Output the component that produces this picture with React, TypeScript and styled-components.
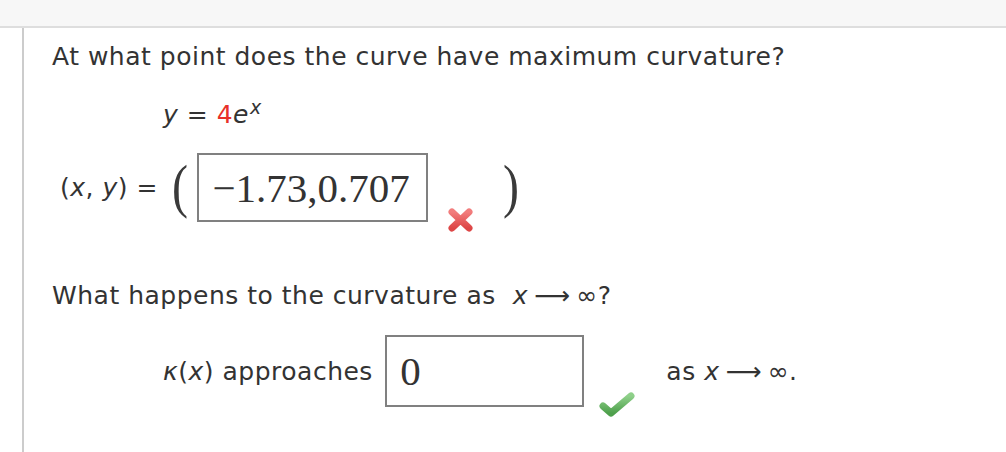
import styled, { createGlobalStyle } from "styled-components";

const GlobalStyle = createGlobalStyle`
  html, body {
    margin: 0;
    padding: 0;
    background: #ffffff;
  }
  body {
    font-family: "DejaVu Sans", Verdana, sans-serif;
    color: #333333;
  }
`;

const TopBar = styled.div`
  height: 26px;
  background-color: #f7f7f7;
  border-bottom: 2px solid #dedede;
`;

const Content = styled.div`
  margin-left: 22px;
  border-left: 2px solid #cccccc;
  height: 424px;
  box-sizing: border-box;
  padding: 14px 0 0 28px;
`;

const Text = styled.div`
  font-size: 25px;
  letter-spacing: 0.5px;
  line-height: 30px;
  margin-top: ${(p: { top?: number }) => p.top ?? 0}px;
`;

const Equation = styled(Text)`
  padding-left: 111px;
`;

const Var = styled.i`
  font-style: italic;
`;

const Red = styled.span`
  color: #e8312a;
`;

const Sup = styled.sup`
  font-size: 19px;
  line-height: 0;
  vertical-align: 9px;
  margin-left: 1px;
`;

const Arrow = styled.span`
  display: inline-block;
  margin: 0 ${(p: { gap?: number }) => p.gap ?? 4}px;
`;

const AnswerRow = styled.div<{ indent: number; top: number }>`
  display: flex;
  align-items: center;
  font-size: 25px;
  letter-spacing: 0.5px;
  padding-left: ${(p) => p.indent}px;
  margin-top: ${(p) => p.top}px;
`;

const Paren = styled.span<{ m: string }>`
  font-family: "Liberation Serif", "Times New Roman", serif;
  font-size: 60px;
  line-height: 60px;
  color: #3a3a3a;
  display: inline-block;
  transform: scaleX(0.8);
  margin: ${(p) => p.m};
`;

const InputBox = styled.div<{ w: number; h: number }>`
  box-sizing: border-box;
  width: ${(p) => p.w}px;
  height: ${(p) => p.h}px;
  border: 2px solid #808080;
  display: flex;
  align-items: center;
  padding-left: 13px;
  font-family: "Liberation Serif", "Times New Roman", serif;
  font-size: 41px;
  letter-spacing: 0;
  color: #333;
`;

const Mark = styled.svg<{ ml: number }>`
  align-self: flex-end;
  flex-shrink: 0;
  margin-bottom: -11px;
  margin-left: ${(p) => p.ml}px;
`;

const Label = styled.span<{ ml?: number; mr?: number }>`
  white-space: pre;
  margin-left: ${(p) => p.ml ?? 0}px;
  margin-right: ${(p) => p.mr ?? 0}px;
`;

const CrossIcon = () => (
  <Mark ml={19} width="27" height="26" viewBox="0 0 27 26">
    <defs>
      <linearGradient id="xg" x1="0" y1="0" x2="0" y2="1">
        <stop offset="0" stopColor="#f27d7d" />
        <stop offset="1" stopColor="#dd4646" />
      </linearGradient>
    </defs>
    <path
      d="M5 5 L22 21 M22 5 L5 21"
      stroke="url(#xg)"
      strokeWidth="7"
      strokeLinecap="round"
    />
  </Mark>
);

const CheckIcon = () => (
  <Mark ml={15} width="36" height="26" viewBox="0 0 36 26">
    <defs>
      <linearGradient id="cg" x1="0" y1="0" x2="0" y2="1">
        <stop offset="0" stopColor="#8fd08a" />
        <stop offset="1" stopColor="#4ea04c" />
      </linearGradient>
    </defs>
    <path
      d="M4 14 L12 21 L32 4"
      fill="none"
      stroke="url(#cg)"
      strokeWidth="7"
      strokeLinecap="round"
      strokeLinejoin="round"
    />
  </Mark>
);

export default function App() {
  return (
    <>
      <GlobalStyle />
      <TopBar />
      <Content>
        <Text>At what point does the curve have maximum curvature?</Text>
        <Equation top={28}>
          <Var>y</Var> = <Red>4</Red>
          <Var>e</Var>
          <Sup>
            <Var>x</Var>
          </Sup>
        </Equation>
        <AnswerRow indent={8} top={23}>
          <Label>
            (<Var>x</Var>, <Var>y</Var>) =
          </Label>
          <Paren m="-4px 7px 0 12px">(</Paren>
          <InputBox w={231} h={69}>−1.73,0.707</InputBox>
          <CrossIcon />
          <Paren m="-4px 0 0 27px">)</Paren>
        </AnswerRow>
        <Text top={59}>
          What happens to the curvature as&nbsp; <Var>x</Var>
          <Arrow gap={6}>⟶</Arrow>∞?
        </Text>
        <AnswerRow indent={111} top={24}>
          <Label mr={4}>
            <Var>κ</Var>(<Var>x</Var>) approaches{" "}
          </Label>
          <InputBox w={199} h={72}>0</InputBox>
          <CheckIcon />
          <Label ml={31}>
            as <Var>x</Var>
            <Arrow gap={6}>⟶</Arrow>∞.
          </Label>
        </AnswerRow>
      </Content>
    </>
  );
}
